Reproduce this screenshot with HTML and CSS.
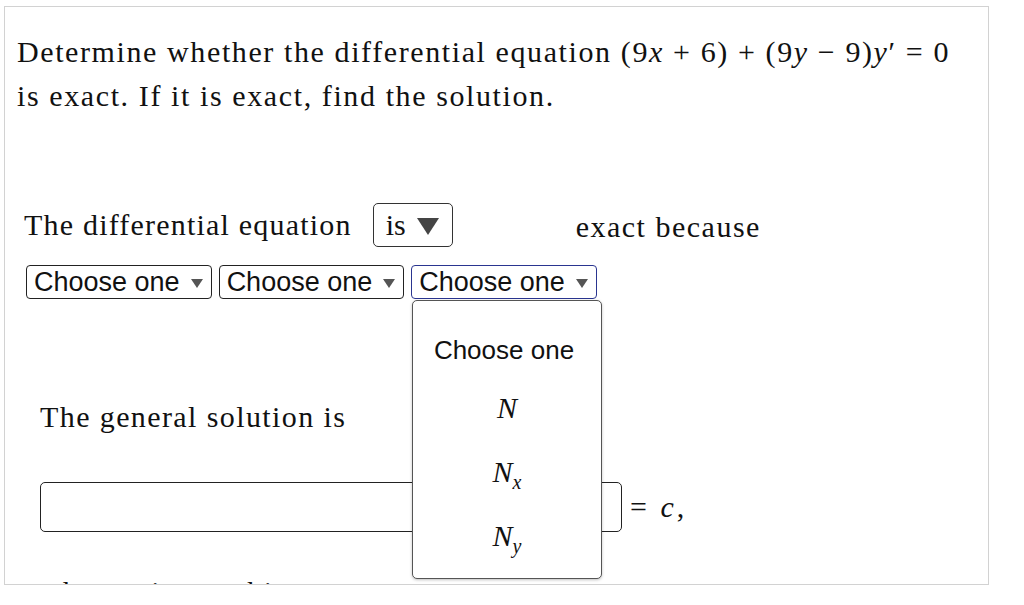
FILE: index.html
```html
<!DOCTYPE html>
<html lang="en">
<head>
    <meta charset="UTF-8">
    <title>Exact differential equation</title>
    <link rel="stylesheet" href="styles.css">
</head>
<body>
    <div class="card">
        <p class="prompt">
            Determine whether the differential equation
            <span class="math">(9<i>x</i> + 6) + (9<i>y</i> &minus; 9)<i>y</i>&prime; = 0</span><br>
            is exact. If it is exact, find the solution.
        </p>

        <div class="row-exact">
            <span class="label">The differential equation</span>
            <span class="select-is">is <span class="tri"></span></span>
            <span class="label because">exact because</span>
        </div>

        <div class="row-choose">
            <span class="choose">Choose one <span class="arrow"></span></span>
            <span class="choose">Choose one <span class="arrow"></span></span>
            <span class="choose focused">Choose one <span class="arrow"></span></span>
        </div>

        <div class="general">The general solution is</div>

        <div class="row-answer">
            <div class="answer-box"></div>
            <span class="math equals">= <i>c</i>,</span>
        </div>

        <div class="cut-line">where c is an arbitrary constant.</div>

        <!-- open dropdown of the third select -->
        <div class="menu">
            <div class="menu-item plain">Choose one</div>
            <div class="menu-item"><i>N</i></div>
            <div class="menu-item"><i>N</i><sub><i>x</i></sub></div>
            <div class="menu-item"><i>N</i><sub><i>y</i></sub></div>
        </div>
    </div>
</body>
</html>
```

FILE: styles.css
```css
body {
    margin: 0;
    background: #ffffff;
    font-family: "Liberation Serif", "DejaVu Serif", serif;
    color: #111;
}

.card {
    position: relative;
    margin: 6px 0 0 4px;
    width: 985px;
    height: 579px;
    border: 1px solid #d2d2d2;
    overflow: hidden;
    box-sizing: border-box;
}

.prompt {
    margin: 0;
    padding: 23px 0 0 12px;
    font-size: 30px;
    line-height: 44px;
    letter-spacing: 1.6px;
}

.math i {
    font-style: italic;
}

.row-exact {
    display: flex;
    align-items: center;
    margin-top: 85px;
    padding-left: 19px;
    font-size: 30px;
    letter-spacing: 1.2px;
}

.select-is {
    display: inline-flex;
    align-items: center;
    gap: 11px;
    margin-left: 21px;
    height: 44px;
    padding: 0 12px;
    border: 1px solid #333;
    border-radius: 5px;
    box-sizing: border-box;
    width: 80px;
    letter-spacing: 0;
}

.tri {
    width: 0;
    height: 0;
    border-left: 11px solid transparent;
    border-right: 11px solid transparent;
    border-top: 17px solid #444;
    margin-top: 3px;
}

.because {
    margin-left: 123px;
    margin-top: 4px;
    letter-spacing: 1.5px;
}

.row-choose {
    display: flex;
    gap: 7px;
    margin-top: 18px;
    padding-left: 21px;
}

.choose {
    display: inline-flex;
    align-items: center;
    gap: 11px;
    height: 34px;
    padding: 0 8px 0 7px;
    border: 1px solid #222;
    border-radius: 4px;
    box-sizing: border-box;
    font-family: "Liberation Sans", Arial, sans-serif;
    font-size: 27px;
}

.choose .arrow {
    width: 0;
    height: 0;
    border-left: 6px solid transparent;
    border-right: 6px solid transparent;
    border-top: 9px solid #555;
    margin-top: 2px;
}

.choose.focused {
    border-color: #2a3590;
}

.general {
    margin-top: 101px;
    padding-left: 35px;
    font-size: 30px;
    letter-spacing: 1.4px;
}

.row-answer {
    display: flex;
    align-items: center;
    margin-top: 48px;
    padding-left: 35px;
}

.answer-box {
    width: 582px;
    height: 50px;
    border: 1px solid #222;
    border-radius: 5px;
    box-sizing: border-box;
}

.equals {
    margin-left: 8px;
    font-size: 30px;
    letter-spacing: 3px;
}

.cut-line {
    margin-top: 43px;
    padding-left: 35px;
    font-size: 30px;
    line-height: 34px;
    letter-spacing: 1.2px;
}

.menu {
    position: absolute;
    left: 407px;
    top: 293px;
    width: 190px;
    height: 279px;
    background: #fff;
    border: 1px solid #555;
    border-radius: 5px;
    box-sizing: border-box;
    box-shadow: 0 1px 3px rgba(0, 0, 0, 0.25);
    padding-top: 34px;
}

.menu-item {
    text-align: center;
    font-size: 30px;
    height: 64px;
}

.menu-item.plain {
    font-family: "Liberation Sans", Arial, sans-serif;
    font-size: 26px;
    height: 56px;
    padding-right: 6px;
}

.menu-item sub {
    font-size: 20px;
}
```
